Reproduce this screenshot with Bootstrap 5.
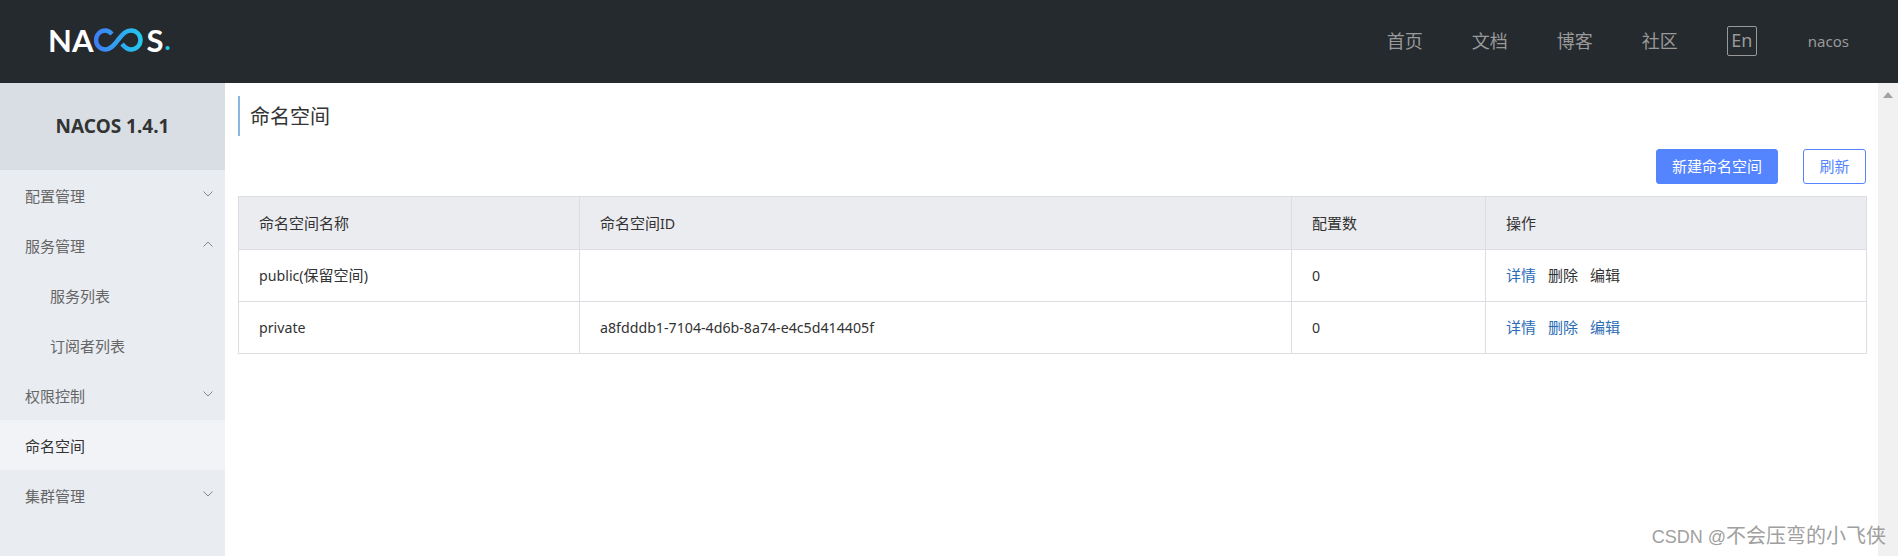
<!DOCTYPE html>
<html lang="zh">
<head>
<meta charset="utf-8">
<title>Nacos</title>
<link href="https://cdn.jsdelivr.net/npm/bootstrap@5.3.0/dist/css/bootstrap.min.css" rel="stylesheet">
<style>
html,body{height:556px;overflow:hidden}
body{font-family:"Noto Sans","Noto Sans CJK SC",sans-serif;color:#333;background:#fff}
.topbar{height:83px;background:#252a2f;padding:0 49px 0 48px}
.logo{height:24px;color:#fff;font:700 31px/24px "Lato","Noto Sans",sans-serif;margin-top:-3px}
.logo svg{width:50px;height:24px;margin:0 2px 0 1px}
.logo-dot{color:#22c8ee;font-size:26px;margin-left:1px}
.toplink{color:#999;font-size:18px;text-decoration:none;line-height:30px}
.toplinks{gap:49px;margin-top:-2px}
.lang{border:1px solid #999;border-radius:2px;width:30px;height:30px;text-align:center;color:#999;font-size:18px;line-height:27px}
.user{color:#999;font-size:15px;line-height:30px;margin-left:2px}
.shell{height:473px}
.sidebar{width:225px;background:#e9ecf1;flex:none}
.side-head{height:87px;background:#d9dee4;font-size:19px;font-weight:700;color:#333;text-align:center;padding-bottom:1px}
.side-item{height:50px;padding:2px 12px 0 25px;font-size:15px;color:#666}
.side-sub{padding-left:50px}
.side-active{background:#f2f3f7;color:#333}
.side-item svg{width:10px;height:6px;margin-top:-5px}
.content{padding:13px 12px 0 13px;min-width:0}
.page-title{border-left:2px solid #88b7e0;height:40px;padding-left:10px;font-size:20px;line-height:42px;color:#333}
.toolbar{gap:25px;margin-top:13px;margin-bottom:12px}
.btn-new,.btn-refresh{height:35px;font-size:15px;padding:0;border-radius:3px;line-height:33px}
.btn-new{width:122px;background:#5584ff;border:1px solid #5584ff;color:#fff}
.btn-refresh{width:63px;background:#fff;border:1px solid #5584ff;color:#5584ff}
.ns-table{table-layout:fixed;width:1628px;margin:0;font-size:15px;border-color:#dcdee3;--bs-table-color:#333}
.ns-table th,.ns-table td{padding:0 0 0 20px;vertical-align:middle;font-weight:400;height:52px;color:#333;border-color:#dcdee3}
.ns-table th{background:#ebecf0;height:53px}
.lat{font-size:14.2px}
.ns-link{color:#2a6cb5;text-decoration:none}
.ns-plain{color:#333;text-decoration:none}
.acts{gap:12px}
.c1{width:341px}.c2{width:712px}.c3{width:194px}.c4{width:381px}
.fake-scroll{width:20px;background:#f1f1f1;flex:none;padding-top:9px}
.fake-scroll svg{width:10px;height:6px;display:block;margin:0 auto}
.watermark{position:absolute;right:12px;bottom:6px;font:20px/26px "Liberation Sans","Noto Sans CJK SC",sans-serif;color:#a0a0a0}
.watermark span{font-size:18px}
</style>
</head>
<body class="position-relative">
<header class="topbar navbar flex-nowrap">
  <div class="logo d-flex align-items-center" aria-label="NACOS.">
    <span>NA</span>
    <svg viewBox="0 0 50 24" aria-hidden="true"><defs><linearGradient id="inf" x1="0" x2="1" y1="0" y2="0"><stop offset="0" stop-color="#3f7ff6"/><stop offset="1" stop-color="#22c8ee"/></linearGradient></defs><path d="M18 6C15.500 3.500 13.500 2.500 11.500 2.500A9.500 9.500 0 0 0 11.500 21.500C17 21.500 20 17 24 12C28 7 31 2.500 37 2.500A9.500 9.500 0 0 1 37 21.500C33 21.500 30.500 19 28 16" fill="none" stroke="url(#inf)" stroke-width="4.500"/></svg>
    <span>S</span><span class="logo-dot">.</span>
  </div>
  <nav class="toplinks d-flex align-items-center">
    <a class="toplink" href="#">首页</a>
    <a class="toplink" href="#">文档</a>
    <a class="toplink" href="#">博客</a>
    <a class="toplink" href="#">社区</a>
    <div class="lang">En</div>
    <div class="user">nacos</div>
  </nav>
</header>
<div class="shell d-flex">
  <aside class="sidebar">
    <div class="side-head d-flex align-items-center justify-content-center">NACOS 1.4.1</div>
    <div class="side-item d-flex align-items-center justify-content-between"><span>配置管理</span><svg viewBox="0 0 10 6"><path d="M.5.500 5 5 9.500.500" fill="none" stroke="#888"/></svg></div>
    <div class="side-item d-flex align-items-center justify-content-between"><span>服务管理</span><svg viewBox="0 0 10 6"><path d="M.5 5.500 5 1 9.500 5.500" fill="none" stroke="#888"/></svg></div>
    <div class="side-item side-sub d-flex align-items-center"><span>服务列表</span></div>
    <div class="side-item side-sub d-flex align-items-center"><span>订阅者列表</span></div>
    <div class="side-item d-flex align-items-center justify-content-between"><span>权限控制</span><svg viewBox="0 0 10 6"><path d="M.5.500 5 5 9.500.500" fill="none" stroke="#888"/></svg></div>
    <div class="side-item side-active d-flex align-items-center"><span>命名空间</span></div>
    <div class="side-item d-flex align-items-center justify-content-between"><span>集群管理</span><svg viewBox="0 0 10 6"><path d="M.5.500 5 5 9.500.500" fill="none" stroke="#888"/></svg></div>
  </aside>
  <main class="content flex-grow-1">
    <div class="page-title">命名空间</div>
    <div class="toolbar d-flex justify-content-end">
      <button class="btn btn-new" type="button">新建命名空间</button>
      <button class="btn btn-refresh" type="button">刷新</button>
    </div>
    <table class="table table-bordered ns-table">
      <colgroup><col class="c1"><col class="c2"><col class="c3"><col class="c4"></colgroup>
      <thead><tr><th>命名空间名称</th><th>命名空间<span class="lat">ID</span></th><th>配置数</th><th>操作</th></tr></thead>
      <tbody>
        <tr><td><span class="lat">public(</span>保留空间<span class="lat">)</span></td><td></td><td><span class="lat">0</span></td><td><div class="acts d-flex"><a class="ns-link" href="#">详情</a><a class="ns-plain" href="#">删除</a><a class="ns-plain" href="#">编辑</a></div></td></tr>
        <tr><td><span class="lat">private</span></td><td><span class="lat">a8fdddb1-7104-4d6b-8a74-e4c5d414405f</span></td><td><span class="lat">0</span></td><td><div class="acts d-flex"><a class="ns-link" href="#">详情</a><a class="ns-link" href="#">删除</a><a class="ns-link" href="#">编辑</a></div></td></tr>
      </tbody>
    </table>
  </main>
  <div class="fake-scroll"><svg viewBox="0 0 10 6"><path d="M0 6 5 0 10 6Z" fill="#a3a3a3"/></svg></div>
</div>
<div class="watermark"><span>CSDN @</span>不会压弯的小飞侠</div>
<script src="https://cdn.jsdelivr.net/npm/bootstrap@5.3.0/dist/js/bootstrap.bundle.min.js"></script>
</body>
</html>
